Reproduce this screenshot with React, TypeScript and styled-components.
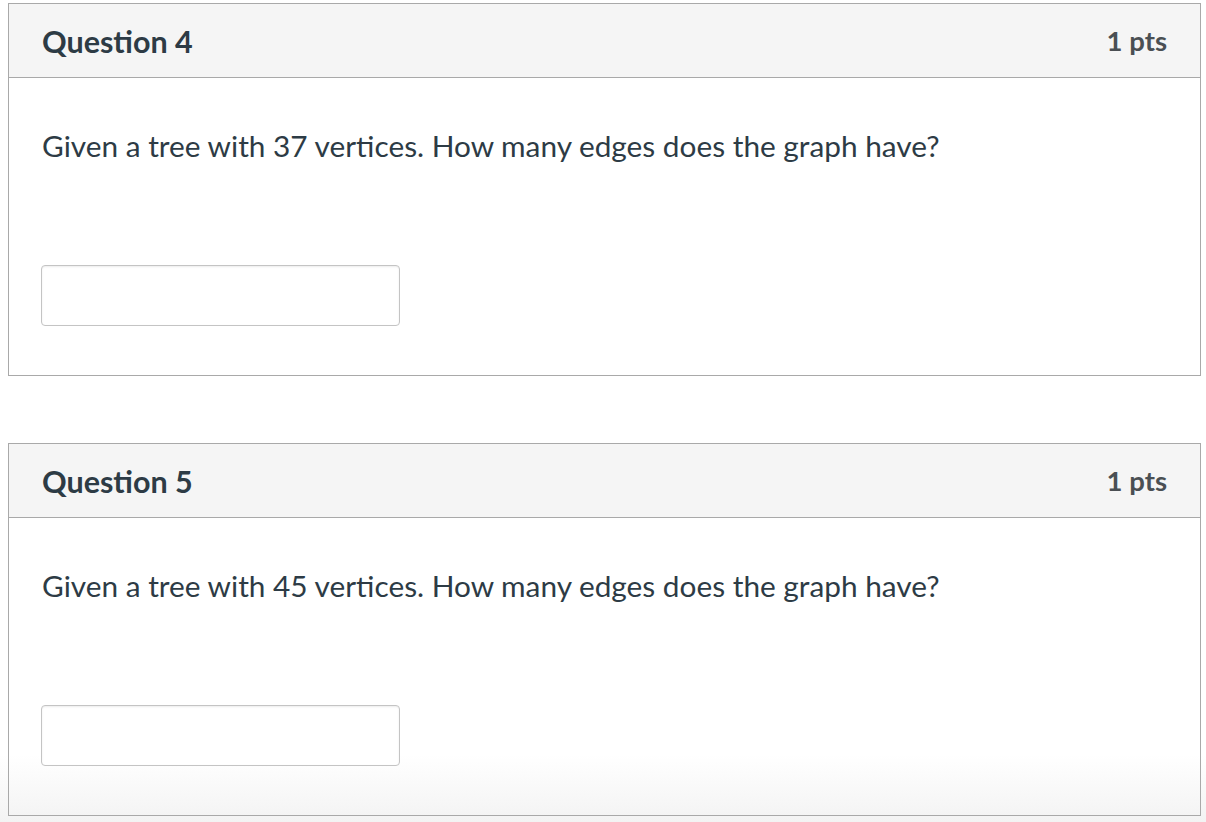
import React from "react";
import styled, { createGlobalStyle } from "styled-components";

const GlobalStyle = createGlobalStyle`
  html, body {
    margin: 0;
    padding: 0;
    background: #ffffff;
  }
  body {
    font-family: Lato, "Noto Sans", "Liberation Sans", sans-serif;
    color: #2d3b45;
  }
`;

const Page = styled.div`
  min-height: 822px;
  box-sizing: border-box;
  padding: 3px 5px 0 8px;
  display: flex;
  flex-direction: column;
  gap: 67px;
  background: linear-gradient(to bottom, #ffffff 0, #ffffff 755px, #f3f3f3 822px);
`;

const Card = styled.section`
  border: 1px solid #a9a9a9;
  display: flex;
  flex-direction: column;
`;

const Header = styled.header`
  height: 74px;
  box-sizing: border-box;
  background: #f5f5f5;
  border-bottom: 1px solid #a9a9a9;
  display: flex;
  align-items: center;
  justify-content: space-between;
  padding: 0 33px 0 33px;
`;

const Title = styled.h2`
  margin: 0;
  font-size: 30.5px;
  font-weight: 700;
  color: #2d3b45;
`;

const Points = styled.span`
  font-size: 27.5px;
  font-weight: 700;
  color: #4a4f53;
`;

const Body = styled.div`
  padding: 48px 33px 49px 32px;
  display: flex;
  flex-direction: column;
  gap: 99px;
`;

const Prompt = styled.p`
  margin: 0 0 0 1px;
  font-size: 29.8px;
  line-height: 40px;
  color: #2d3b45;
`;

const Answer = styled.input`
  width: 359px;
  height: 61px;
  box-sizing: border-box;
  border: 1px solid #c4c4c4;
  border-radius: 4px;
  box-shadow: inset 0 1px 2px rgba(0, 0, 0, 0.08);
  background: #ffffff;
  font-family: inherit;
  font-size: 22px;
  padding: 0 12px;
  outline: none;
`;

type Question = {
  id: number;
  points: number;
  text: string;
};

const questions: Question[] = [
  { id: 4, points: 1, text: "Given a tree with 37 vertices. How many edges does the graph have?" },
  { id: 5, points: 1, text: "Given a tree with 45 vertices. How many edges does the graph have?" },
];

const App = () => {
  return (
    <>
      <GlobalStyle />
      <Page>
        {questions.map((q) => (
          <Card key={q.id}>
            <Header>
              <Title>Question {q.id}</Title>
              <Points>{q.points} pts</Points>
            </Header>
            <Body>
              <Prompt>{q.text}</Prompt>
              <Answer type="text" aria-label={`Answer for question ${q.id}`} />
            </Body>
          </Card>
        ))}
      </Page>
    </>
  );
};

export default App;
